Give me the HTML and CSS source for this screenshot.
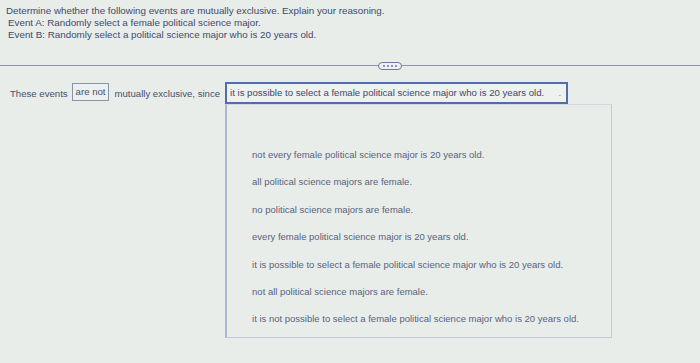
FILE: index.html
```html
<!DOCTYPE html>
<html lang="en">
<head>
  <meta charset="UTF-8" />
  <title>Mutually exclusive events</title>
  <link rel="stylesheet" href="styles.css">
</head>
<body>
  <main>
    <section class="question">
      <p>Determine whether the following events are mutually exclusive. Explain your reasoning.</p>
      <p class="event">Event A: Randomly select a female political science major.</p>
      <p class="event">Event B: Randomly select a political science major who is 20 years old.</p>
    </section>

    <div class="divider">
      <span class="more"><i></i><i></i><i></i><i></i></span>
    </div>

    <section class="answer">
      <div class="sentence">
        <span>These events</span>
        <span class="choice">are not</span>
        <span class="since">mutually exclusive, since</span>
        <div class="dropdown">
          <div class="selected">it is possible to select a female political science major who is 20 years old.<span class="dot">.</span></div>
          <ul class="options">
            <li>not every female political science major is 20 years old.</li>
            <li>all political science majors are female.</li>
            <li>no political science majors are female.</li>
            <li>every female political science major is 20 years old.</li>
            <li>it is possible to select a female political science major who is 20 years old.</li>
            <li>not all political science majors are female.</li>
            <li>it is not possible to select a female political science major who is 20 years old.</li>
          </ul>
        </div>
      </div>
    </section>
  </main>
</body>
</html>
```

FILE: styles.css
```css
* {
  box-sizing: border-box;
}
body {
  margin: 0;
  font-family: "Liberation Sans", Arial, sans-serif;
  font-size: 9.6px;
  color: #46506c;
  background: #e8edea;
  width: 700px;
  height: 363px;
  overflow: hidden;
}
main {
  display: flex;
  flex-direction: column;
}
.question {
  padding: 5px 0 0 6px;
  font-size: 9.8px;
  color: #3f4a6c;
}
.question p {
  margin: 0;
  line-height: 12px;
}
.question .event {
  padding-left: 2px;
}
.divider {
  margin-top: 24px;
  height: 1px;
  background: #8e97aa;
  display: flex;
  justify-content: center;
  align-items: center;
}
.more {
  width: 24px;
  height: 8px;
  margin-left: 80px;
  border: 1px solid #6d7a9c;
  border-radius: 5px;
  background: #eef1f4;
  display: flex;
  justify-content: center;
  align-items: center;
  gap: 2px;
}
.more i {
  width: 2px;
  height: 2px;
  background: #6d7a9c;
  border-radius: 1px;
}
.answer {
  padding: 16px 0 0 10px;
}
.sentence {
  display: flex;
  align-items: flex-start;
}
.sentence > span {
  line-height: 22px;
  margin-top: 1px;
}
.choice {
  margin: 4px 5px 0 4px;
  padding: 0 3px;
  height: 18px;
  border: 1px solid #8a93a6;
  background: #edf0f0;
  line-height: 16px !important;
}
.since {
  margin-right: 5px;
}
.dropdown {
  display: flex;
  flex-direction: column;
}
.selected {
  width: 343px;
  height: 22px;
  padding: 0 0 0 3px;
  border: 2px solid #4e6eae;
  background: #eef1f0;
  line-height: 18px;
  display: flex;
  justify-content: space-between;
  color: #3f4866;
}
.selected .dot {
  padding-right: 5px;
  color: #7d87a0;
}
.options {
  list-style: none;
  margin: 0;
  padding: 44px 0 8px 25px;
  width: 387px;
  height: 234px;
  border: 1px solid #c3cad4;
  border-left: 2px solid #a9b6d4;
  border-top-color: #d3d8de;
  display: flex;
  flex-direction: column;
  gap: 16.4px;
  color: #59627c;
}
.options li {
  line-height: 11px;
  font-size: 9.5px;
}
```
